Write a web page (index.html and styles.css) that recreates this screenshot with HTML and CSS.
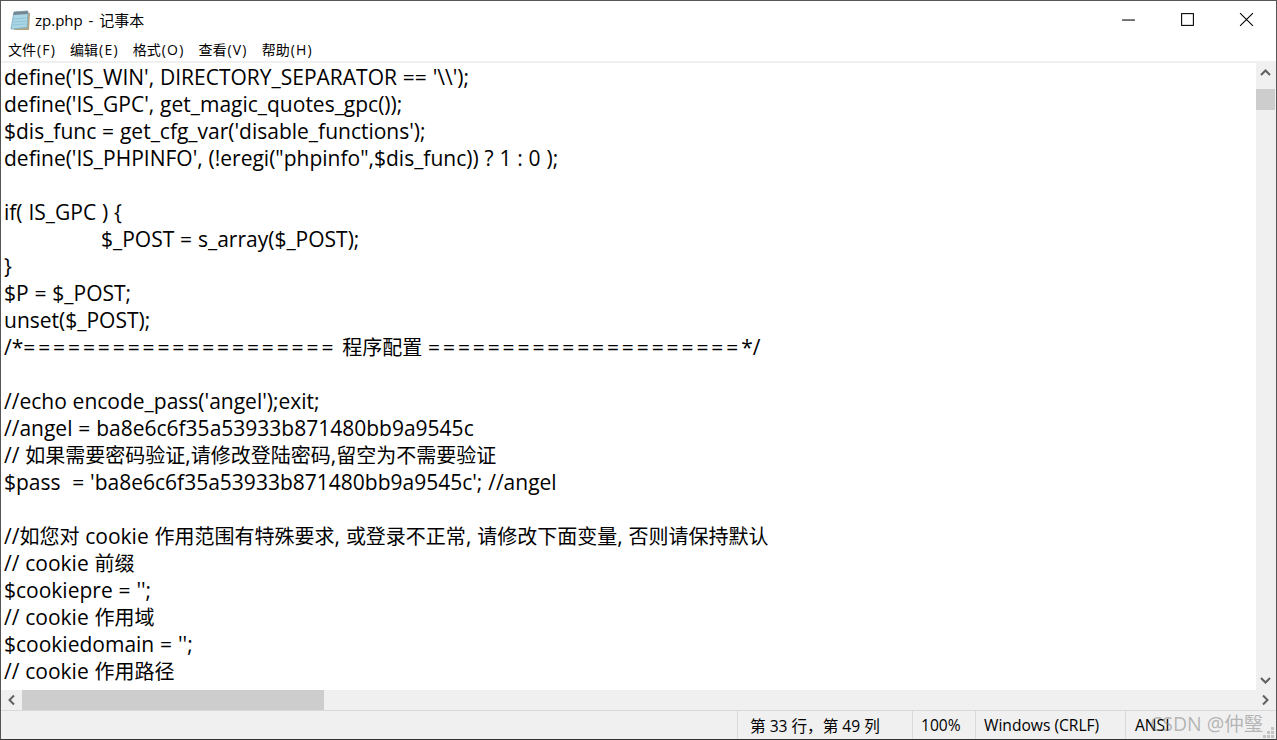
FILE: index.html
```html
<!DOCTYPE html>
<html lang="zh">
<head>
<meta charset="utf-8">
<title>zp.php - 记事本</title>
<link rel="stylesheet" href="styles.css">
</head>
<body>
<div class="window">
  <div class="peek"></div>
  <header class="titlebar">
    <svg class="app-icon" width="20" height="22" viewBox="0 0 20 22">
      <path d="M6 4 L20 4 L19 21 L4 21 Z" fill="#b3a27f"/>
      <path d="M4 3 L18 2 L17 18.500 L1 20 Z" fill="#aad6e6" stroke="#86b4c6" stroke-width="1"/>
      <path d="M4 3 L18 2 L17.700 5 L3.400 6 Z" fill="#76868f"/>
      <path d="M4 10L16 9M3.500 13L16 12M3 16L15.500 15" stroke="#93c4d6" stroke-width="1" fill="none"/>
    </svg>
    <span class="title">zp.php - 记事本</span>
    <div class="controls">
      <svg class="ctl" width="14" height="14" viewBox="0 0 14 14"><path d="M1 7.500H13" stroke="#000" fill="none"/></svg>
      <svg class="ctl" width="14" height="14" viewBox="0 0 14 14"><rect x="1.500" y="1.500" width="11" height="11" stroke="#000" fill="none"/></svg>
      <svg class="ctl" width="14" height="14" viewBox="0 0 14 14"><path d="M1 1L13 13M13 1L1 13" stroke="#000" fill="none"/></svg>
    </div>
  </header>
  <nav class="menubar">
    <span>文件<span class="key">(F)</span></span><span>编辑<span class="key">(E)</span></span><span>格式<span class="key">(O)</span></span><span>查看<span class="key">(V)</span></span><span>帮助<span class="key">(H)</span></span>
  </nav>
  <div class="middle">
    <pre class="editor">define('IS_WIN', DIRECTORY_SEPARATOR == '\\');
define('IS_GPC', get_magic_quotes_gpc());
$dis_func = get_cfg_var('disable_functions');
define('IS_PHPINFO', (!eregi("phpinfo",$dis_func)) ? 1 : 0 );

if( IS_GPC ) {
	$_POST = s_array($_POST);
}
$P = $_POST;
unset($_POST);
/*<span class="rule">=====================</span> <span class="cjk">程序配置</span> <span class="rule">=====================</span>*/

//echo encode_pass('angel');exit;
//angel = ba8e6c6f35a53933b871480bb9a9545c
// <span class="cjk">如果需要密码验证</span>,<span class="cjk">请修改登陆密码</span>,<span class="cjk">留空为不需要验证</span>
$pass  = 'ba8e6c6f35a53933b871480bb9a9545c'; //angel

//<span class="cjk">如您对</span> cookie <span class="cjk">作用范围有特殊要求</span>, <span class="cjk">或登录不正常</span>, <span class="cjk">请修改下面变量</span>, <span class="cjk">否则请保持默认</span>
// cookie <span class="cjk">前缀</span>
$cookiepre = '';
// cookie <span class="cjk">作用域</span>
$cookiedomain = '';
// cookie <span class="cjk">作用路径</span>
$cookiepath = '';</pre>
    <div class="vscroll">
      <svg class="arrow" width="19" height="20" viewBox="0 0 19 20"><path d="M5 12L9.500 7.500L14 12" stroke="#606060" stroke-width="2" fill="none"/></svg>
      <div class="vtrack"><div class="vthumb"></div></div>
      <svg class="arrow" width="19" height="20" viewBox="0 0 19 20"><path d="M5 8L9.500 12.500L14 8" stroke="#606060" stroke-width="2" fill="none"/></svg>
    </div>
  </div>
  <div class="hscroll">
    <svg class="arrow-h" width="21" height="20" viewBox="0 0 21 20"><path d="M13 5.500L8.500 10L13 14.500" stroke="#606060" stroke-width="2" fill="none"/></svg>
    <div class="htrack"><div class="hthumb"></div></div>
    <svg class="arrow-h" width="21" height="20" viewBox="0 0 21 20"><path d="M8 5.500L12.500 10L8 14.500" stroke="#606060" stroke-width="2" fill="none"/></svg>
  </div>
  <footer class="statusbar">
    <span class="cell pos">第 33 行，第 49 列</span>
    <span class="cell zoom">100%</span>
    <span class="cell eol">Windows (CRLF)</span>
    <span class="cell enc">ANSI</span>
  </footer>
  <svg class="grip" width="12" height="12" viewBox="0 0 12 12"><path d="M8 0h3v3H8zM4 4h3v3H4zM8 4h3v3H8zM0 8h3v3H0zM4 8h3v3H4zM8 8h3v3H8z" fill="#c4c4c4"/></svg>
  <div class="watermark">CSDN @仲瑿</div>
</div>
</body>
</html>
```
FILE: styles.css
```css
* { box-sizing: border-box; }
html, body { margin: 0; height: 100%; overflow: hidden; }
body { font-family: "Open Sans", "Noto Sans CJK SC", sans-serif; color: #000; background: #fff; }
.window { position: relative; width: 1277px; height: 740px; display: flex; flex-direction: column; border: 1px solid #555; border-bottom-color: #333; background: #fff; overflow: hidden; }
.peek { position: absolute; left: 1134px; top: -1px; width: 112px; height: 1px; background: #8a3a28; }
.titlebar { height: 37px; display: flex; align-items: center; padding-left: 9px; flex: none; }
.app-icon { flex: none; }
.title { margin-left: 5px; font-size: 15px; word-spacing: 2px; }
.controls { margin-left: auto; display: flex; height: 100%; }
.ctl { width: 59px; height: 37px; padding: 11px 22px; }
.menubar { height: 25px; display: flex; align-items: center; padding: 0 0 2px 7px; gap: 14px; font-size: 14px; flex: none; border-bottom: 2px solid #f0f0f0; }
.key { letter-spacing: 1.200px; margin-left: 1px; }
.middle { flex: 1; display: flex; min-height: 0; }
.editor { flex: 1; margin: 0; padding: 1px 0 0 3px; font: 21px/27px "Open Sans", "Noto Sans CJK SC", sans-serif; word-spacing: .4px; tab-size: 97px; overflow: hidden; white-space: pre; }
.cjk { font-size: 20px; line-height: 1; }
.rule { letter-spacing: 2.900px; }
.vscroll { width: 20px; background: #f0f0f0; display: flex; flex-direction: column; flex: none; }
.arrow, .arrow-h { flex: none; }
.vtrack { flex: 1; }
.vthumb { height: 21px; margin-top: 6px; width: 19px; background: #cdcdcd; }
.hscroll { height: 21px; background: #f0f0f0; display: flex; flex: none; border-bottom: 1px solid #d9d9d9; }
.htrack { flex: 1; }
.hthumb { width: 302px; height: 20px; background: #cdcdcd; }
.statusbar { height: 28px; flex: none; background: #f0f0f0; display: flex; font-size: 15.600px; padding-left: 736px; align-items: stretch; }
.cell { border-left: 1px solid #d9d9d9; display: flex; align-items: center; padding-left: 12px; }
.pos { width: 175px; }
.zoom { width: 63px; padding-left: 8px; }
.eol { width: 150px; padding-left: 8px; }
.enc { flex: 1; padding-left: 9px; }
.grip { position: absolute; right: 1px; bottom: 0; }
.watermark { position: absolute; left: 1149px; top: 707px; font-size: 19.500px; color: rgba(120,120,120,.5); }
```
